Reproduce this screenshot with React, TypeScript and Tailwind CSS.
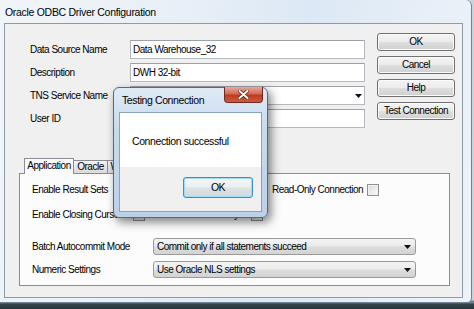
const WinButton = ({ label }: { label: string }) => (
  <div className="flex h-[18px] w-[78px] items-center justify-center rounded-[3px] border border-[#707070] bg-[linear-gradient(180deg,#f4f4f4_0%,#ececec_48%,#dedede_52%,#d0d0d0_100%)] shadow-[inset_0_0_0_1px_#fbfbfb]">
    {label}
  </div>
);

const Arrow = () => (
  <svg width="7" height="4" viewBox="0 0 7 4" className="shrink-0">
    <path d="M0 0h7L3.5 4z" fill="#111" />
  </svg>
);

const TextBox = ({ value, dropdown }: { value?: string; dropdown?: boolean }) => (
  <div className="flex h-[19px] w-[235px] items-center border border-[#b5b8bf] border-t-[#9da0a7] bg-white pl-[2px] pr-[2px]">
    <span className="flex-1 truncate">{value}</span>
    {dropdown && <Arrow />}
  </div>
);

const Checkbox = () => (
  <div className="h-[12px] w-[12px] shrink-0 border border-[#8e8f8f] bg-[linear-gradient(135deg,#d9d9d9,#fbfbfb)] shadow-[inset_0_0_0_1px_#f2f2f2]" />
);

const Combo = ({ value }: { value: string }) => (
  <div className="flex h-[17px] w-[263px] items-center rounded-[3px] border border-[#9a9a9a] bg-[linear-gradient(180deg,#f4f4f4_0%,#ebebeb_48%,#dddddd_52%,#d3d3d3_100%)] pl-[3px] pr-[4px]">
    <span className="flex-1 truncate">{value}</span>
    <Arrow />
  </div>
);

const formRows = [
  { label: 'Data Source Name', value: 'Data Warehouse_32' },
  { label: 'Description', value: 'DWH 32-bit' },
  { label: 'TNS Service Name', value: '', dropdown: true },
  { label: 'User ID', value: '' },
];

export default function App() {
  return (
    <div className="relative h-[309px] w-[474px] overflow-hidden whitespace-nowrap bg-[linear-gradient(180deg,#c9d3da_0%,#c9d3da_97%,#2f4046_98%)] text-[10px] leading-none tracking-[-0.5px] text-black [font-family:'Liberation_Sans',Arial,sans-serif]">
      <div className="absolute bottom-0 left-0 h-[7px] w-full bg-[linear-gradient(180deg,#7f9aa3_0%,#33454b_30%,#25343a_100%)]" />
      {/* main window */}
      <div className="relative flex h-[303px] w-[472px] flex-col rounded-tr-[6px] rounded-br-[5px] border-r border-b border-[#6f8296] bg-[linear-gradient(100deg,#f1f5f9_0%,#e8eff7_35%,#dce8f5_60%,#e6eef7_80%,#eef3f8_100%)]">
        <div className="flex h-[23px] items-center pl-[5px] pt-[2px] text-[10.5px] tracking-[-0.3px]">
          Oracle ODBC Driver Configuration
        </div>
        <div className="ml-[4px] h-[275px] w-[459px] border border-[#8d9aa8] bg-[#f0f0f0]">
          <div className="flex pl-[25px]">
            <div className="flex w-[335px] flex-col gap-[4px] pt-[16px]">
              {formRows.map((row) => (
                <div key={row.label} className="flex h-[19px] items-center">
                  <span className="w-[100px]">{row.label}</span>
                  <TextBox value={row.value} dropdown={row.dropdown} />
                </div>
              ))}
            </div>
            <div className="ml-[12px] flex flex-col gap-[5px] pt-[9px]">
              <WinButton label="OK" />
              <WinButton label="Cancel" />
              <WinButton label="Help" />
              <WinButton label="Test Connection" />
            </div>
          </div>

          {/* tabs */}
          <div className="ml-[14px] mt-[30px] w-[431px]">
            <div className="flex h-[15px] items-end pl-[5px]">
              <div className="relative z-10 -mb-px flex h-[16px] w-[50px] items-start justify-center border border-b-0 border-[#898c95] bg-[#fcfcfc] pt-[2px]">
                Application
              </div>
              <div className="flex h-[13px] w-[34px] items-center justify-center border border-b-0 border-l-0 border-[#898c95] bg-[linear-gradient(180deg,#f3f3f3,#dadada)]">
                Oracle
              </div>
              <div className="flex h-[13px] w-[60px] items-center justify-center border border-b-0 border-l-0 border-[#898c95] bg-[linear-gradient(180deg,#f3f3f3,#dadada)]">
                Workarounds
              </div>
            </div>
            <div className="h-[113px] border border-[#898c95] bg-[#fcfcfc] pl-[12px] pt-[7px]">
              <div className="flex h-[17px] items-center">
                <span className="w-[101px]">Enable Result Sets</span>
                <Checkbox />
                <span className="ml-[127px] w-[95px]">Read-Only Connection</span>
                <Checkbox />
              </div>
              <div className="mt-[8px] flex h-[17px] items-center">
                <span className="w-[101px]">Enable Closing Cursors</span>
                <Checkbox />
                <span className="ml-[7px] w-[99px]">Enable Thread Safety</span>
                <Checkbox />
              </div>
              <div className="mt-[15px] flex h-[17px] items-center">
                <span className="w-[121px]">Batch Autocommit Mode</span>
                <Combo value="Commit only if all statements succeed" />
              </div>
              <div className="mt-[6px] flex h-[17px] items-center">
                <span className="w-[121px]">Numeric Settings</span>
                <Combo value="Use Oracle NLS settings" />
              </div>
            </div>
          </div>
        </div>
      </div>

      {/* Testing Connection message box */}
      <div className="absolute left-[113px] top-[87px] flex h-[131px] w-[155px] flex-col rounded-[6px] border border-[#52698a] bg-[linear-gradient(180deg,#dfeaf6_0%,#c9dbee_30%,#bcd1e8_100%)] px-[5px] pb-[5px] shadow-[3px_4px_10px_rgba(0,0,0,0.5)]">
        <div className="relative flex h-[24px] items-center pl-[3px] text-[10.5px] tracking-[-0.4px]">
          Testing Connection
          <div className="absolute right-[-1px] top-[-1px] flex h-[16px] w-[39px] items-center justify-center rounded-b-[4px] border border-t-0 border-[#6e2a22] bg-[linear-gradient(180deg,#e9a899_0%,#d46a55_45%,#c0391f_55%,#cf5a3c_100%)]">
            <svg width="11" height="9" viewBox="0 0 11 9">
              <path d="M1.5 1l8 7M9.5 1l-8 7" stroke="#4a1a12" strokeWidth="3.4" strokeLinecap="round" />
              <path d="M1.5 1l8 7M9.5 1l-8 7" stroke="#fff" strokeWidth="2" strokeLinecap="round" />
            </svg>
          </div>
        </div>
        <div className="flex flex-1 flex-col border border-[#8aa2bd] bg-white">
          <div className="h-[54px] pl-[12px] pt-[22px] text-[10.5px] leading-[12px] tracking-[-0.4px]">
            Connection successful
          </div>
          <div className="flex flex-1 items-start justify-end bg-[#f0f0f0] pr-[8px] pt-[10px]">
            <div className="flex h-[21px] w-[70px] items-center justify-center rounded-[3px] border border-[#3c8ccf] bg-[linear-gradient(180deg,#f4f6f7_0%,#eceff1_48%,#dde2e5_52%,#d2d8dc_100%)] text-[10.5px] shadow-[inset_0_0_0_1px_#9fdcf9]">
              OK
            </div>
          </div>
        </div>
      </div>
    </div>
  );
}
